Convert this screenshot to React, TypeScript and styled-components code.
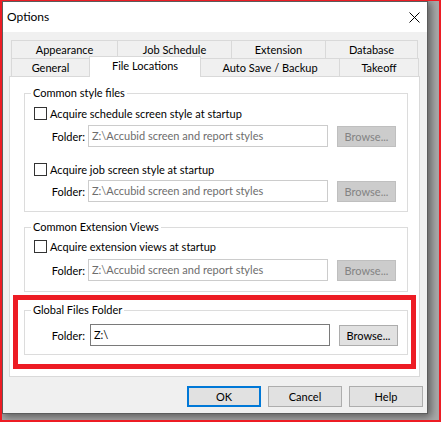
import styled, { createGlobalStyle } from "styled-components";

const GlobalStyle = createGlobalStyle`
  html, body {
    margin: 0;
    padding: 0;
    background: #ffffff;
  }
  body {
    font-family: Lato, "Noto Sans", sans-serif;
    font-size: 11px;
    color: #000000;
  }
`;

const topTabs = [
  { label: "Appearance", width: 106 },
  { label: "Job Schedule", width: 114 },
  { label: "Extension", width: 94 },
  { label: "Database", width: 93 },
];

const bottomTabs = [
  { label: "General", width: 78 },
  { label: "File Locations", width: 112, selected: true },
  { label: "Auto Save / Backup", width: 139 },
  { label: "Takeoff", width: 80 },
];

function App(): JSX.Element {
  return (
    <>
      <GlobalStyle />
      <Screen>
        <Window>
          <TitleBar>
            <Title>Options</Title>
            <CloseBox>
              <svg width="11" height="11" viewBox="0 0 11 11">
                <path d="M0.5 0.5 L10.5 10.5 M10.5 0.5 L0.5 10.5" stroke="#000" strokeWidth="1" />
              </svg>
            </CloseBox>
          </TitleBar>

          <Body>
            <TabStrip>
              <TabRow>
                {topTabs.map((t, i) => (
                  <Tab key={t.label} $width={t.width} $last={i === topTabs.length - 1}>
                    {t.label}
                  </Tab>
                ))}
              </TabRow>
              <TabRow>
                {bottomTabs.map((t, i) =>
                  t.selected ? (
                    <SelectedTab key={t.label} $width={t.width}>
                      {t.label}
                    </SelectedTab>
                  ) : (
                    <Tab
                      key={t.label}
                      $width={t.width}
                      $last={i === bottomTabs.length - 1}
                      $afterSelected={i === 2}
                    >
                      {t.label}
                    </Tab>
                  )
                )}
              </TabRow>
            </TabStrip>

            <Panel>
              <GroupBox $padTop={13} $padBottom={9}>
                <Legend>Common style files</Legend>
                <CheckRow>
                  <CheckBox />
                  <CheckLabel>Acquire schedule screen style at startup</CheckLabel>
                </CheckRow>
                <FolderRow $gap={5}>
                  <FolderLabel>Folder:</FolderLabel>
                  <PathInput $disabled>Z:\Accubid screen and report styles</PathInput>
                  <BrowseButton $disabled>Browse...</BrowseButton>
                </FolderRow>
                <CheckRow $gap={16}>
                  <CheckBox />
                  <CheckLabel>Acquire job screen style at startup</CheckLabel>
                </CheckRow>
                <FolderRow $gap={4}>
                  <FolderLabel>Folder:</FolderLabel>
                  <PathInput $disabled>Z:\Accubid screen and report styles</PathInput>
                  <BrowseButton $disabled>Browse...</BrowseButton>
                </FolderRow>
              </GroupBox>

              <GroupBox $gapTop={15} $padTop={12} $padBottom={10}>
                <Legend>Common Extension Views</Legend>
                <CheckRow>
                  <CheckBox />
                  <CheckLabel>Acquire extension views at startup</CheckLabel>
                </CheckRow>
                <FolderRow $gap={6}>
                  <FolderLabel>Folder:</FolderLabel>
                  <PathInput $disabled>Z:\Accubid screen and report styles</PathInput>
                  <BrowseButton $disabled>Browse...</BrowseButton>
                </FolderRow>
              </GroupBox>

              <GroupBox $gapTop={18} $padTop={13} $padBottom={8}>
                <Legend>Global Files Folder</Legend>
                <FolderRow>
                  <FolderLabel>Folder:</FolderLabel>
                  <PathInput $shift={2}>Z:\</PathInput>
                  <BrowseButton>Browse...</BrowseButton>
                </FolderRow>
              </GroupBox>

              <Highlight />
            </Panel>
          </Body>

          <Footer>
            <DialogButton $focused>OK</DialogButton>
            <DialogButton>Cancel</DialogButton>
            <DialogButton>Help</DialogButton>
          </Footer>
        </Window>
      </Screen>
    </>
  );
}

const Screen = styled.div`
  width: 441px;
  height: 422px;
  box-sizing: border-box;
  border: solid #ed1c24;
  border-width: 1px 2px 2px 2px;
  overflow: hidden;
  background: #a9a9a9;
`;

const Window = styled.div`
  width: 426px;
  height: 413px;
  box-sizing: border-box;
  border: 1px solid #5c5c5c;
  background: #f0f0f0;
  display: flex;
  flex-direction: column;
  box-shadow: 2px 2px 8px 1px rgba(0, 0, 0, 0.45);
`;

const TitleBar = styled.div`
  height: 30px;
  background: #ffffff;
  display: flex;
  align-items: center;
  justify-content: space-between;
  padding-left: 4px;
`;

const Title = styled.span`
  font-size: 12px;
  line-height: 16px;
`;

const CloseBox = styled.div`
  width: 26px;
  height: 30px;
  display: flex;
  align-items: center;
  justify-content: center;
`;

const Body = styled.div`
  padding: 8px 7px 0 6px;
`;

const TabStrip = styled.div`
  margin-left: 2px;
`;

const TabRow = styled.div`
  display: flex;
  height: 18px;
`;

const Tab = styled.div<{ $width: number; $last?: boolean; $afterSelected?: boolean }>`
  width: ${(p) => p.$width}px;
  height: 18px;
  box-sizing: border-box;
  border-top: 1px solid #d9d9d9;
  border-left: 1px solid #d9d9d9;
  border-right: ${(p) => (p.$last ? "1px solid #d9d9d9" : "none")};
  margin-left: ${(p) => (p.$afterSelected ? "-1px" : "0")};
  background: #f0f0f0;
  text-align: center;
  line-height: 18px;
  white-space: nowrap;
`;

const SelectedTab = styled.div<{ $width: number }>`
  position: relative;
  z-index: 2;
  width: ${(p) => p.$width}px;
  height: 21px;
  margin-top: -2px;
  box-sizing: border-box;
  border: 1px solid #d9d9d9;
  border-bottom: none;
  background: #ffffff;
  text-align: center;
  line-height: 18px;
  white-space: nowrap;
`;

const Panel = styled.div`
  position: relative;
  height: 301px;
  box-sizing: border-box;
  border: 1px solid #d9d9d9;
  background: #ffffff;
  padding: 16px 11px 0 14px;
`;

const GroupBox = styled.div<{ $gapTop?: number; $padTop: number; $padBottom: number }>`
  position: relative;
  border: 1px solid #dcdcdc;
  margin-top: ${(p) => p.$gapTop ?? 0}px;
  padding: ${(p) => p.$padTop}px 0 ${(p) => p.$padBottom}px 0;
`;

const Legend = styled.span`
  position: absolute;
  top: -9px;
  left: 6px;
  padding: 0 2px;
  background: #ffffff;
  line-height: 16px;
  white-space: nowrap;
`;

const CheckRow = styled.div<{ $gap?: number }>`
  display: flex;
  align-items: center;
  height: 13px;
  margin-top: ${(p) => p.$gap ?? 0}px;
  padding-left: 9px;
`;

const CheckBox = styled.span`
  width: 13px;
  height: 13px;
  box-sizing: border-box;
  border: 1px solid #333333;
  background: #ffffff;
  flex-shrink: 0;
`;

const CheckLabel = styled.span`
  margin-left: 3px;
  line-height: 16px;
  white-space: nowrap;
`;

const FolderRow = styled.div<{ $gap?: number }>`
  display: flex;
  align-items: center;
  height: 22px;
  margin-top: ${(p) => p.$gap ?? 0}px;
`;

const FolderLabel = styled.span`
  width: 60px;
  text-align: right;
  flex-shrink: 0;
`;

const PathInput = styled.div<{ $disabled?: boolean; $shift?: number }>`
  width: 240px;
  height: 22px;
  margin-left: ${(p) => 3 + (p.$shift ?? 0)}px;
  box-sizing: border-box;
  border: 1px solid ${(p) => (p.$disabled ? "#cccccc" : "#7a7a7a")};
  background: #ffffff;
  color: ${(p) => (p.$disabled ? "#6d6d6d" : "#000000")};
  padding: 0 3px;
  line-height: 20px;
  white-space: nowrap;
  overflow: hidden;
`;

const BrowseButton = styled.div<{ $disabled?: boolean }>`
  width: 59px;
  height: 21px;
  margin-left: 9px;
  box-sizing: border-box;
  border: 1px solid ${(p) => (p.$disabled ? "#bfbfbf" : "#adadad")};
  background: ${(p) => (p.$disabled ? "#cccccc" : "#e1e1e1")};
  color: ${(p) => (p.$disabled ? "#838383" : "#000000")};
  text-align: center;
  line-height: 19px;
`;

const Highlight = styled.div`
  position: absolute;
  left: 3px;
  top: 218px;
  width: 403px;
  height: 74px;
  box-sizing: border-box;
  border: 5px solid #ed1c24;
  pointer-events: none;
`;

const Footer = styled.div`
  display: flex;
  justify-content: flex-end;
  gap: 7px;
  padding: 9px 4px 0 0;
`;

const DialogButton = styled.div<{ $focused?: boolean }>`
  width: 74px;
  height: 21px;
  box-sizing: border-box;
  border: ${(p) => (p.$focused ? "2px solid #0078d7" : "1px solid #adadad")};
  background: #e1e1e1;
  display: flex;
  align-items: center;
  justify-content: center;
`;

export default App;
